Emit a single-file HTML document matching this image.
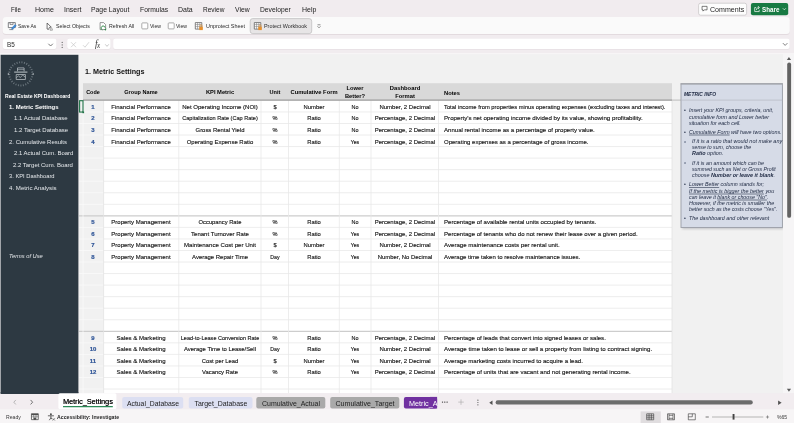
<!DOCTYPE html>
<html><head><meta charset="utf-8"><title>Real Estate KPI Dashboard</title>
<style>
html,body{margin:0;padding:0;}
body{width:794px;height:423px;overflow:hidden;background:#f1ecef;position:relative;font-family:"Liberation Sans",sans-serif;}
.t{position:absolute;white-space:nowrap;margin:0;padding:0;line-height:12px;}
#half{position:absolute;left:0;top:0;width:794px;height:423px;will-change:transform;transform:translateY(0.5px);}
#bgsvg{position:absolute;left:0;top:0;display:block;}
u{text-decoration-thickness:0.4px;text-underline-offset:0.5px;text-decoration-color:rgba(28,39,64,0.55);}
</style></head><body>
<svg id="bgsvg" width="794" height="423" viewBox="0 0 794 423">
<defs><filter id="bl" x="-10%" y="-10%" width="120%" height="120%"><feGaussianBlur stdDeviation="1"/></filter></defs>
<rect x="698.60" y="3.20" width="48.00" height="12.00" fill="#fdfdfd" rx="2" stroke="#c4c2c3" stroke-width="0.7" />
<g transform="translate(701.3,5.6) scale(0.5)"><path d="M1.500 1.500h10v7H6l-2.500 2.500V8.500h-2z" fill="none" stroke="#3a3a3a" stroke-width="1.3"/></g>
<rect x="750.90" y="3.10" width="37.30" height="12.10" fill="#187a43" rx="2" />
<g transform="translate(753.7,5.3) scale(0.5)"><path d="M5 4.500H2v8h9V9M5.500 9.500c0-3.500 2-5 5-5M8.500 1.500l3 3-3 3" fill="none" stroke="#fff" stroke-width="1.4"/></g>
<g transform="translate(782.6,7.8) scale(0.5)"><path d="M0.500 1l3 3 3-3" fill="none" stroke="#fff" stroke-width="1.4"/></g>
<rect x="2.60" y="17.50" width="787.20" height="17.40" fill="#e3dbdf" rx="3.5" />
<rect x="2.60" y="16.90" width="787.20" height="17.20" fill="#fafafa" rx="3.5" />
<g transform="translate(7.3,21.6) scale(0.5)"><path d="M2 2h14v10H2z" fill="#fff" stroke="#56585c" stroke-width="1.5"/><path d="M5.500 2v4h6V2M4 16h8" fill="none" stroke="#56585c" stroke-width="1.3"/><path d="M8.500 15.500l1-3.500 6-6 2.500 2.500-6 6z" fill="#3f8ad6" stroke="#2c6fb5" stroke-width="0.8"/></g>
<g transform="translate(45.6,22) scale(0.5)"><path d="M3 2l8.500 8.500H7.800L5.600 15 3 14z" fill="#fff" stroke="#3a3a3a" stroke-width="1.4"/><path d="M9 13.500h4.500v3H9z" fill="none" stroke="#666" stroke-width="1"/></g>
<g transform="translate(98.6,21.6) scale(0.5)"><path d="M3 2h7l4 4v10H3z" fill="#fff" stroke="#6a6a6a" stroke-width="1.4"/><path d="M7.500 16.500a4 4 0 1 1 5.500-4.500" fill="none" stroke="#2e8b47" stroke-width="2"/><path d="M11 15.500l4.500-1.500-1 4.500z" fill="#2e8b47"/></g>
<rect x="141.80" y="22.90" width="6.00" height="6.00" fill="#fff" rx="0.8" stroke="#8a8a8a" stroke-width="0.7" />
<rect x="168.20" y="22.90" width="6.00" height="6.00" fill="#fff" rx="0.8" stroke="#8a8a8a" stroke-width="0.7" />
<g transform="translate(194.3,21.6) scale(0.5)"><path d="M2 2h13v13H2z" fill="#fff" stroke="#5a5a5a" stroke-width="1.5"/><path d="M2 6h13M2 10h13M6.500 2v13M11 2v13" stroke="#7a7a7a" stroke-width="1.1" fill="none"/><path d="M10 10.500h7v6.500h-7z" fill="#e8912d"/><path d="M11.500 10.500V8.500a2 2 0 0 1 4 0v2" fill="none" stroke="#e8912d" stroke-width="1.3"/></g>
<rect x="250.20" y="18.60" width="61.50" height="15.00" fill="#e7e5e6" rx="2.5" stroke="#bcbabb" stroke-width="0.7" />
<g transform="translate(253.3,21.6) scale(0.5)"><path d="M2 2h13v13H2z" fill="#fff" stroke="#5a5a5a" stroke-width="1.5"/><path d="M2 6h13M2 10h13M6.500 2v13M11 2v13" stroke="#7a7a7a" stroke-width="1.1" fill="none"/><path d="M10 10.500h7v6.500h-7z" fill="#e8912d"/><path d="M11.500 10.500V8.500a2 2 0 0 1 4 0v2" fill="none" stroke="#e8912d" stroke-width="1.3"/></g>
<g transform="translate(316.5,23.8) scale(0.5)"><path d="M2 2h6M2 5l3 3 3-3" fill="none" stroke="#444" stroke-width="1.2"/></g>
<rect x="2.80" y="39.50" width="53.60" height="10.30" fill="#e6dfe3" rx="2" />
<rect x="67.20" y="39.50" width="43.30" height="10.30" fill="#e6dfe3" rx="2" />
<rect x="113.20" y="39.50" width="676.40" height="10.30" fill="#e6dfe3" rx="2" />
<rect x="2.80" y="38.80" width="53.60" height="10.30" fill="#fff" rx="2" />
<g transform="translate(47.6,43) scale(0.5)"><path d="M1.500 1.500L6 6l4.500-4.500" fill="none" stroke="#555" stroke-width="1.6"/></g>
<circle cx="62.2" cy="42.4" r="0.6" fill="#666"/>
<circle cx="62.2" cy="44.9" r="0.6" fill="#666"/>
<circle cx="62.2" cy="47.4" r="0.6" fill="#666"/>
<rect x="67.20" y="38.80" width="43.30" height="10.30" fill="#fff" rx="2" />
<g transform="translate(70,41.2) scale(0.5)"><path d="M2 2l10 10M12 2L2 12" stroke="#c6c6c6" stroke-width="1.4"/></g>
<g transform="translate(82,41.2) scale(0.5)"><path d="M2 8l4 4 8-10" fill="none" stroke="#c6c6c6" stroke-width="1.4"/></g>
<g transform="translate(104.5,43.6) scale(0.5)"><path d="M1.500 1.500L5 5.500l3.500-4" fill="none" stroke="#b0b0b0" stroke-width="1.4"/></g>
<rect x="113.20" y="38.80" width="676.40" height="10.30" fill="#fff" rx="2" />
<g transform="translate(782.4,42.4) scale(0.5)"><path d="M1 1.500L5.500 6 10 1.500" fill="none" stroke="#555" stroke-width="1.5"/></g>
<rect x="0.00" y="53.20" width="794.00" height="1.60" fill="#f8f7f8" />
<rect x="0.00" y="54.20" width="783.00" height="339.00" fill="#f1f1f1" />
<rect x="0.60" y="54.80" width="77.80" height="339.20" fill="#2d3942" />
<circle cx="20.8" cy="73.9" r="11.6" fill="none" stroke="#69747c" stroke-width="1.9" stroke-dasharray="1.0 1.5"/>
<circle cx="8.4" cy="73.9" r="0.75" fill="#c3c9cd"/><circle cx="33.2" cy="73.9" r="0.75" fill="#c3c9cd"/>
<g transform="translate(20.8,73.9)" fill="none" stroke="#b4bbc0" stroke-width="0.8"><path d="M-3.300 -2.600v-3.400h6.600v3.400"/><path d="M-3.300 -4.300h6.600" stroke-width="0.6"/><path d="M-6.600 -1.800h13.200" stroke-width="1.1"/><path d="M-4.600 0.600h9.200v5h-9.200z" stroke-width="0.8"/><path d="M-4.600 3.800l2.200-1.800 2 1.600 2.200-2.400 2.800 2" stroke-width="0.7"/></g>
<rect x="83.00" y="100.40" width="589.00" height="292.80" fill="#fff" />
<rect x="83.00" y="100.40" width="20.60" height="292.80" fill="#f1f1f1" />
<path d="M103.60 111.95L672.00 111.95" stroke="#e7e7e7" stroke-width="0.75" fill="none"/>
<path d="M79.00 111.95L103.60 111.95" stroke="#fbfbfb" stroke-width="0.7" fill="none"/>
<path d="M103.60 123.49L672.00 123.49" stroke="#e7e7e7" stroke-width="0.75" fill="none"/>
<path d="M79.00 123.49L103.60 123.49" stroke="#fbfbfb" stroke-width="0.7" fill="none"/>
<path d="M103.60 135.03L672.00 135.03" stroke="#e7e7e7" stroke-width="0.75" fill="none"/>
<path d="M79.00 135.03L103.60 135.03" stroke="#fbfbfb" stroke-width="0.7" fill="none"/>
<path d="M103.60 146.58L672.00 146.58" stroke="#e7e7e7" stroke-width="0.75" fill="none"/>
<path d="M79.00 146.58L103.60 146.58" stroke="#fbfbfb" stroke-width="0.7" fill="none"/>
<path d="M103.60 158.12L672.00 158.12" stroke="#e7e7e7" stroke-width="0.75" fill="none"/>
<path d="M79.00 158.12L103.60 158.12" stroke="#fbfbfb" stroke-width="0.7" fill="none"/>
<path d="M103.60 169.67L672.00 169.67" stroke="#e7e7e7" stroke-width="0.75" fill="none"/>
<path d="M79.00 169.67L103.60 169.67" stroke="#fbfbfb" stroke-width="0.7" fill="none"/>
<path d="M103.60 181.21L672.00 181.21" stroke="#e7e7e7" stroke-width="0.75" fill="none"/>
<path d="M79.00 181.21L103.60 181.21" stroke="#fbfbfb" stroke-width="0.7" fill="none"/>
<path d="M103.60 192.76L672.00 192.76" stroke="#e7e7e7" stroke-width="0.75" fill="none"/>
<path d="M79.00 192.76L103.60 192.76" stroke="#fbfbfb" stroke-width="0.7" fill="none"/>
<path d="M103.60 204.30L672.00 204.30" stroke="#e7e7e7" stroke-width="0.75" fill="none"/>
<path d="M79.00 204.30L103.60 204.30" stroke="#fbfbfb" stroke-width="0.7" fill="none"/>
<path d="M79.00 215.85L672.00 215.85" stroke="#cdcdcd" stroke-width="1.2" fill="none"/>
<path d="M103.60 227.39L672.00 227.39" stroke="#e7e7e7" stroke-width="0.75" fill="none"/>
<path d="M79.00 227.39L103.60 227.39" stroke="#fbfbfb" stroke-width="0.7" fill="none"/>
<path d="M103.60 238.94L672.00 238.94" stroke="#e7e7e7" stroke-width="0.75" fill="none"/>
<path d="M79.00 238.94L103.60 238.94" stroke="#fbfbfb" stroke-width="0.7" fill="none"/>
<path d="M103.60 250.48L672.00 250.48" stroke="#e7e7e7" stroke-width="0.75" fill="none"/>
<path d="M79.00 250.48L103.60 250.48" stroke="#fbfbfb" stroke-width="0.7" fill="none"/>
<path d="M103.60 262.03L672.00 262.03" stroke="#e7e7e7" stroke-width="0.75" fill="none"/>
<path d="M79.00 262.03L103.60 262.03" stroke="#fbfbfb" stroke-width="0.7" fill="none"/>
<path d="M103.60 273.57L672.00 273.57" stroke="#e7e7e7" stroke-width="0.75" fill="none"/>
<path d="M79.00 273.57L103.60 273.57" stroke="#fbfbfb" stroke-width="0.7" fill="none"/>
<path d="M103.60 285.12L672.00 285.12" stroke="#e7e7e7" stroke-width="0.75" fill="none"/>
<path d="M79.00 285.12L103.60 285.12" stroke="#fbfbfb" stroke-width="0.7" fill="none"/>
<path d="M103.60 296.66L672.00 296.66" stroke="#e7e7e7" stroke-width="0.75" fill="none"/>
<path d="M79.00 296.66L103.60 296.66" stroke="#fbfbfb" stroke-width="0.7" fill="none"/>
<path d="M103.60 308.21L672.00 308.21" stroke="#e7e7e7" stroke-width="0.75" fill="none"/>
<path d="M79.00 308.21L103.60 308.21" stroke="#fbfbfb" stroke-width="0.7" fill="none"/>
<path d="M103.60 319.75L672.00 319.75" stroke="#e7e7e7" stroke-width="0.75" fill="none"/>
<path d="M79.00 319.75L103.60 319.75" stroke="#fbfbfb" stroke-width="0.7" fill="none"/>
<path d="M79.00 331.30L672.00 331.30" stroke="#cdcdcd" stroke-width="1.2" fill="none"/>
<path d="M103.60 342.84L672.00 342.84" stroke="#e7e7e7" stroke-width="0.75" fill="none"/>
<path d="M79.00 342.84L103.60 342.84" stroke="#fbfbfb" stroke-width="0.7" fill="none"/>
<path d="M103.60 354.39L672.00 354.39" stroke="#e7e7e7" stroke-width="0.75" fill="none"/>
<path d="M79.00 354.39L103.60 354.39" stroke="#fbfbfb" stroke-width="0.7" fill="none"/>
<path d="M103.60 365.94L672.00 365.94" stroke="#e7e7e7" stroke-width="0.75" fill="none"/>
<path d="M79.00 365.94L103.60 365.94" stroke="#fbfbfb" stroke-width="0.7" fill="none"/>
<path d="M103.60 377.48L672.00 377.48" stroke="#e7e7e7" stroke-width="0.75" fill="none"/>
<path d="M79.00 377.48L103.60 377.48" stroke="#fbfbfb" stroke-width="0.7" fill="none"/>
<path d="M103.60 389.03L672.00 389.03" stroke="#e7e7e7" stroke-width="0.75" fill="none"/>
<path d="M79.00 389.03L103.60 389.03" stroke="#fbfbfb" stroke-width="0.7" fill="none"/>
<path d="M178.80 100.40L178.80 393.20" stroke="#e7e7e7" stroke-width="0.75" fill="none"/>
<path d="M261.00 100.40L261.00 393.20" stroke="#e7e7e7" stroke-width="0.75" fill="none"/>
<path d="M288.50 100.40L288.50 393.20" stroke="#e7e7e7" stroke-width="0.75" fill="none"/>
<path d="M339.30 100.40L339.30 393.20" stroke="#e7e7e7" stroke-width="0.75" fill="none"/>
<path d="M371.00 100.40L371.00 393.20" stroke="#e7e7e7" stroke-width="0.75" fill="none"/>
<path d="M438.50 100.40L438.50 393.20" stroke="#e7e7e7" stroke-width="0.75" fill="none"/>
<path d="M103.60 100.40L103.60 393.20" stroke="#e4e4e4" stroke-width="0.75" fill="none"/>
<path d="M672.00 100.40L672.00 393.20" stroke="#e2e2e2" stroke-width="0.75" fill="none"/>
<path d="M83.00 100.40L83.00 393.20" stroke="#fbfbfb" stroke-width="0.7" fill="none"/>
<rect x="83.00" y="83.20" width="589.00" height="17.20" fill="#d9d9d9" />
<path d="M83.00 100.10L672.00 100.10" stroke="#8c8c8c" stroke-width="1.0" fill="none"/>
<path d="M672.00 100.10L782.00 100.10" stroke="#b5b5b5" stroke-width="0.9" fill="none"/>
<rect x="79.60" y="100.70" width="3.40" height="11.35" fill="none" stroke="#1e7145" stroke-width="1.1" />
<rect x="82.40" y="111.50" width="1.70" height="1.70" fill="#1e7145" />
<rect x="682.20" y="85.40" width="101.40" height="143.70" fill="#8e9096" opacity="0.45" filter="url(#bl)"/>
<rect x="681.00" y="83.80" width="101.40" height="143.70" fill="#d6dbe7" stroke="#9b9ea7" stroke-width="0.9" />
<path d="M681.00 100.10L782.40 100.10" stroke="#b4b8c2" stroke-width="0.7" fill="none"/>
<path d="M680.60 83.80L782.80 83.80" stroke="#a2a4aa" stroke-width="1.3" fill="none"/>
<rect x="783.00" y="54.20" width="11.00" height="339.00" fill="#f6f5f6" />
<rect x="787.20" y="62.60" width="3.90" height="155.20" fill="#636363" rx="1.9" />
<g transform="translate(786.6,56.6) scale(0.5)"><path d="M0.500 7l4.200-6 4.200 6z" fill="#5a5a5a"/></g>
<g transform="translate(786.6,388.6) scale(0.5)"><path d="M0.500 0.500l4.200 6 4.200-6z" fill="#5a5a5a"/></g>
<rect x="0.00" y="393.20" width="794.00" height="29.80" fill="#f2edf0" />
<rect x="0.00" y="409.30" width="794.00" height="14.00" fill="#f7f5f6" />
<rect x="0.60" y="392.20" width="77.80" height="1.80" fill="#2d3942" />
<g transform="translate(12.8,399.2) scale(0.5)"><path d="M6 1.500L2 6l4 4.500" fill="none" stroke="#a0a0a0" stroke-width="1.5"/></g>
<g transform="translate(29.6,399.2) scale(0.5)"><path d="M2 1.500L6 6l-4 4.500" fill="none" stroke="#4a4a4a" stroke-width="1.5"/></g>
<rect x="58.40" y="393.20" width="58.00" height="15.80" fill="#fff" rx="1.5" />
<path d="M63.00 406.60L112.80 406.60" stroke="#2c8a57" stroke-width="1.1" fill="none"/>
<rect x="122.20" y="396.90" width="61.00" height="11.60" fill="#dcdff2" rx="2" />
<rect x="188.80" y="396.90" width="63.70" height="11.60" fill="#dcdff2" rx="2" />
<rect x="256.30" y="396.90" width="69.00" height="11.60" fill="#a9a9a9" rx="2" />
<rect x="330.20" y="396.90" width="69.10" height="11.60" fill="#a9a9a9" rx="2" />
<rect x="403.90" y="396.90" width="33.20" height="11.60" fill="#7030a0" rx="2" />
<rect x="430.00" y="396.90" width="7.10" height="11.60" fill="#7030a0" />
<circle cx="442.5" cy="402.1" r="0.7" fill="#333"/>
<circle cx="444.8" cy="402.1" r="0.7" fill="#333"/>
<circle cx="447.1" cy="402.1" r="0.7" fill="#333"/>
<g transform="translate(458,399.1) scale(0.5)"><path d="M6 0.500v11M0.500 6h11" stroke="#a6a6a6" stroke-width="1.2"/></g>
<circle cx="477.9" cy="400.2" r="0.6" fill="#555"/>
<circle cx="477.9" cy="402.5" r="0.6" fill="#555"/>
<circle cx="477.9" cy="404.8" r="0.6" fill="#555"/>
<g transform="translate(489,400.2) scale(0.5)"><path d="M7 0.500L0.500 5l6.500 4.500z" fill="#505050"/></g>
<rect x="495.60" y="400.30" width="257.20" height="4.20" fill="#6b6b6b" rx="2.1" />
<g transform="translate(777.6,400.2) scale(0.5)"><path d="M1 0.500L8 5l-7 4.500z" fill="#505050"/></g>
<g transform="translate(30.8,413.0) scale(0.5)"><path d="M1.300 1.300h13.600v12h-13.600z" fill="#fff" stroke="#4d4d4d" stroke-width="1.6"/><path d="M1.300 3.200h13.600" stroke="#4d4d4d" stroke-width="2.4"/><path d="M1.300 7.600h13.600M5.800 3.200v10M10.400 3.200v10" stroke="#5a5a5a" stroke-width="1.2" fill="none"/><circle cx="8.200" cy="11.400" r="2.400" fill="#4d4d4d"/></g>
<g transform="translate(47.4,413.0) scale(0.5)"><circle cx="7" cy="2.400" r="1.900" fill="#4a4a4a"/><path d="M1 5.600h12M7 5.600v4.400M7 9.600l-3.200 4.800M7 9.600l2.400 3" fill="none" stroke="#4a4a4a" stroke-width="1.700"/><path d="M10.500 10.500l4.500 4.500M15 10.500l-4.500 4.500" stroke="#4a4a4a" stroke-width="1.300"/></g>
<rect x="640.60" y="411.40" width="20.20" height="11.60" fill="#e0dddf" />
<g transform="translate(646.2,413.3) scale(0.5)"><path d="M1 1h14v12H1zM1 5h14M1 9h14M5.700 1v12M10.300 1v12" fill="none" stroke="#333" stroke-width="1.2"/></g>
<g transform="translate(667,413.3) scale(0.5)"><path d="M1 1h14v12H1zM4 1v12M12 1v12M4 4h8M4 10h8" fill="none" stroke="#333" stroke-width="1.2"/></g>
<g transform="translate(687.8,413.3) scale(0.5)"><path d="M1 1h14v12H1zM1 7h8M9 1v6" fill="none" stroke="#333" stroke-width="1.2"/></g>
<path d="M705.60 417.00L708.80 417.00" stroke="#555" stroke-width="0.8" fill="none"/>
<path d="M712.00 417.00L763.30 417.00" stroke="#8a8a8a" stroke-width="0.6" fill="none"/>
<rect x="732.60" y="414.00" width="1.90" height="5.60" fill="#444" />
<g transform="translate(765.9,415.4) scale(0.5)"><path d="M3.200 0v6.400M0 3.200h6.400" stroke="#555" stroke-width="1.1"/></g>
</svg>
<div class="t" style="top:4px;font-size:7.3px;color:#222;left:11.30px;transform-origin:0 50%;transform:scaleX(0.8417);">File</div>
<div class="t" style="top:4px;font-size:7.3px;color:#222;left:34.80px;transform-origin:0 50%;transform:scaleX(0.9706);">Home</div>
<div class="t" style="top:4px;font-size:7.3px;color:#222;left:63.70px;transform-origin:0 50%;transform:scaleX(0.9531);">Insert</div>
<div class="t" style="top:4px;font-size:7.3px;color:#222;left:91.40px;transform-origin:0 50%;transform:scaleX(0.9343);">Page Layout</div>
<div class="t" style="top:4px;font-size:7.3px;color:#222;left:139.80px;transform-origin:0 50%;transform:scaleX(0.9270);">Formulas</div>
<div class="t" style="top:4px;font-size:7.3px;color:#222;left:178.00px;transform-origin:0 50%;transform:scaleX(0.9534);">Data</div>
<div class="t" style="top:4px;font-size:7.3px;color:#222;left:203.20px;transform-origin:0 50%;transform:scaleX(0.8941);">Review</div>
<div class="t" style="top:4px;font-size:7.3px;color:#222;left:235.20px;transform-origin:0 50%;transform:scaleX(0.9305);">View</div>
<div class="t" style="top:4px;font-size:7.3px;color:#222;left:260.10px;transform-origin:0 50%;transform:scaleX(0.9227);">Developer</div>
<div class="t" style="top:4px;font-size:7.3px;color:#222;left:301.70px;transform-origin:0 50%;transform:scaleX(0.9525);">Help</div>
<div class="t" style="top:4px;font-size:7.3px;color:#262626;left:709.60px;transform-origin:0 50%;transform:scaleX(0.9691);">Comments</div>
<div class="t" style="top:4px;font-size:7.3px;color:#fff;font-weight:bold;left:762.00px;transform-origin:0 50%;transform:scaleX(0.8576);">Share</div>
<div class="t" style="top:39px;font-size:6.6px;color:#2a2a2a;left:7.00px;transform-origin:0 50%;transform:scaleX(0.9662);">B5</div>
<div class="t" style="left:94.8px;top:38.2px;font-size:9.6px;line-height:12px;font-family:'Liberation Serif',serif;font-style:italic;color:#3c3c3c;transform:scaleX(0.96);transform-origin:0 50%;">f<span style="font-size:7.4px;position:relative;top:0.6px;left:-0.6px">x</span></div>
<div class="t" style="top:90px;font-size:5.3px;color:#fff;font-weight:bold;left:5.20px;transform-origin:0 50%;transform:scaleX(0.9627);">Real Estate KPI Dashboard</div>
<div class="t" style="top:112px;font-size:6.0px;color:#e6e9ec;left:13.50px;transform-origin:0 50%;transform:scaleX(0.9980);">1.1 Actual Database</div>
<div class="t" style="top:147px;font-size:6.0px;color:#e6e9ec;left:13.50px;transform-origin:0 50%;transform:scaleX(0.9879);">2.1 Actual Cum. Board</div>
<div class="t" style="top:170px;font-size:6.0px;color:#e6e9ec;left:9.20px;transform-origin:0 50%;transform:scaleX(0.9608);">3. KPI Dashboard</div>
<div class="t" style="top:182px;font-size:6.0px;color:#e6e9ec;left:9.20px;transform-origin:0 50%;transform:scaleX(1.0197);">4. Metric Analysis</div>
<div class="t" style="top:250px;font-size:6.2px;color:#e6e9ec;font-style:italic;left:8.70px;transform-origin:0 50%;transform:scaleX(0.9226);">Terms of Use</div>
<div class="t" style="top:66px;font-size:8.0px;color:#111;font-weight:bold;left:84.80px;transform-origin:0 50%;transform:scaleX(0.8983);">1. Metric Settings</div>
<div class="t" style="top:86px;font-size:6.1px;color:#000;font-weight:bold;left:-106.60px;width:400px;text-align:center;transform-origin:50% 50%;transform:scaleX(0.8919);">Code</div>
<div class="t" style="top:86px;font-size:6.1px;color:#000;font-weight:bold;left:-58.70px;width:400px;text-align:center;transform-origin:50% 50%;transform:scaleX(0.9152);">Group Name</div>
<div class="t" style="top:86px;font-size:6.1px;color:#000;font-weight:bold;left:20.30px;width:400px;text-align:center;transform-origin:50% 50%;transform:scaleX(0.9454);">KPI Metric</div>
<div class="t" style="top:86px;font-size:6.1px;color:#000;font-weight:bold;left:74.60px;width:400px;text-align:center;transform-origin:50% 50%;transform:scaleX(0.9109);">Unit</div>
<div class="t" style="top:86px;font-size:6.1px;color:#000;font-weight:bold;left:114.10px;width:400px;text-align:center;transform-origin:50% 50%;transform:scaleX(0.9454);">Cumulative Form</div>
<div class="t" style="top:82px;font-size:6.1px;color:#000;font-weight:bold;left:155.20px;width:400px;text-align:center;transform-origin:50% 50%;transform:scaleX(0.9408);">Lower</div>
<div class="t" style="top:90px;font-size:6.1px;color:#000;font-weight:bold;left:155.30px;width:400px;text-align:center;transform-origin:50% 50%;transform:scaleX(0.9414);">Better?</div>
<div class="t" style="top:82px;font-size:6.1px;color:#000;font-weight:bold;left:204.90px;width:400px;text-align:center;transform-origin:50% 50%;transform:scaleX(0.9573);">Dashboard</div>
<div class="t" style="top:90px;font-size:6.1px;color:#000;font-weight:bold;left:205.20px;width:400px;text-align:center;transform-origin:50% 50%;transform:scaleX(0.9529);">Format</div>
<div class="t" style="top:112px;font-size:6.1px;color:#2f5597;font-weight:bold;left:-106.60px;width:400px;text-align:center;transform-origin:50% 50%;transform:scaleX(0.9800);-webkit-text-stroke:0.2px #2f5597;">2</div>
<div class="t" style="top:112px;font-size:6.0px;color:#161616;left:-58.60px;width:400px;text-align:center;transform-origin:50% 50%;transform:scaleX(0.9896);-webkit-text-stroke:0.14px #161616;">Financial Performance</div>
<div class="t" style="top:112px;font-size:6.0px;color:#161616;left:20.10px;width:400px;text-align:center;transform-origin:50% 50%;transform:scaleX(0.9291);-webkit-text-stroke:0.14px #161616;">Capitalization Rate (Cap Rate)</div>
<div class="t" style="top:112px;font-size:6.0px;color:#161616;left:74.80px;width:400px;text-align:center;transform-origin:50% 50%;transform:scaleX(0.9372);-webkit-text-stroke:0.14px #161616;">%</div>
<div class="t" style="top:112px;font-size:6.0px;color:#161616;left:114.20px;width:400px;text-align:center;transform-origin:50% 50%;transform:scaleX(0.9710);-webkit-text-stroke:0.14px #161616;">Ratio</div>
<div class="t" style="top:112px;font-size:6.0px;color:#161616;left:155.20px;width:400px;text-align:center;transform-origin:50% 50%;transform:scaleX(0.9127);-webkit-text-stroke:0.14px #161616;">No</div>
<div class="t" style="top:112px;font-size:6.0px;color:#161616;left:204.70px;width:400px;text-align:center;transform-origin:50% 50%;transform:scaleX(0.9968);-webkit-text-stroke:0.14px #161616;">Percentage, 2 Decimal</div>
<div class="t" style="top:112px;font-size:6.0px;color:#161616;left:444.00px;transform-origin:0 50%;transform:scaleX(1.0248);-webkit-text-stroke:0.14px #161616;">Property's net operating income divided by its value, showing profitability.</div>
<div class="t" style="top:216px;font-size:6.1px;color:#2f5597;font-weight:bold;left:-106.60px;width:400px;text-align:center;transform-origin:50% 50%;transform:scaleX(0.9800);-webkit-text-stroke:0.2px #2f5597;">5</div>
<div class="t" style="top:216px;font-size:6.0px;color:#161616;left:-58.60px;width:400px;text-align:center;transform-origin:50% 50%;transform:scaleX(0.9980);-webkit-text-stroke:0.14px #161616;">Property Management</div>
<div class="t" style="top:216px;font-size:6.0px;color:#161616;left:20.10px;width:400px;text-align:center;transform-origin:50% 50%;transform:scaleX(0.9650);-webkit-text-stroke:0.14px #161616;">Occupancy Rate</div>
<div class="t" style="top:216px;font-size:6.0px;color:#161616;left:74.80px;width:400px;text-align:center;transform-origin:50% 50%;transform:scaleX(0.9372);-webkit-text-stroke:0.14px #161616;">%</div>
<div class="t" style="top:216px;font-size:6.0px;color:#161616;left:114.20px;width:400px;text-align:center;transform-origin:50% 50%;transform:scaleX(0.9710);-webkit-text-stroke:0.14px #161616;">Ratio</div>
<div class="t" style="top:216px;font-size:6.0px;color:#161616;left:155.20px;width:400px;text-align:center;transform-origin:50% 50%;transform:scaleX(0.9127);-webkit-text-stroke:0.14px #161616;">No</div>
<div class="t" style="top:216px;font-size:6.0px;color:#161616;left:204.70px;width:400px;text-align:center;transform-origin:50% 50%;transform:scaleX(0.9968);-webkit-text-stroke:0.14px #161616;">Percentage, 2 Decimal</div>
<div class="t" style="top:216px;font-size:6.0px;color:#161616;left:444.00px;transform-origin:0 50%;transform:scaleX(1.0125);-webkit-text-stroke:0.14px #161616;">Percentage of available rental units occupied by tenants.</div>
<div class="t" style="top:239px;font-size:6.1px;color:#2f5597;font-weight:bold;left:-106.60px;width:400px;text-align:center;transform-origin:50% 50%;transform:scaleX(0.9800);-webkit-text-stroke:0.2px #2f5597;">7</div>
<div class="t" style="top:239px;font-size:6.0px;color:#161616;left:-58.60px;width:400px;text-align:center;transform-origin:50% 50%;transform:scaleX(0.9980);-webkit-text-stroke:0.14px #161616;">Property Management</div>
<div class="t" style="top:239px;font-size:6.0px;color:#161616;left:20.10px;width:400px;text-align:center;transform-origin:50% 50%;transform:scaleX(1.0136);-webkit-text-stroke:0.14px #161616;">Maintenance Cost per Unit</div>
<div class="t" style="top:239px;font-size:6.0px;color:#161616;left:74.80px;width:400px;text-align:center;transform-origin:50% 50%;transform:scaleX(0.9591);-webkit-text-stroke:0.14px #161616;">$</div>
<div class="t" style="top:239px;font-size:6.0px;color:#161616;left:114.20px;width:400px;text-align:center;transform-origin:50% 50%;transform:scaleX(0.9795);-webkit-text-stroke:0.14px #161616;">Number</div>
<div class="t" style="top:239px;font-size:6.0px;color:#161616;left:155.20px;width:400px;text-align:center;transform-origin:50% 50%;transform:scaleX(0.8582);-webkit-text-stroke:0.14px #161616;">Yes</div>
<div class="t" style="top:239px;font-size:6.0px;color:#161616;left:204.70px;width:400px;text-align:center;transform-origin:50% 50%;transform:scaleX(1.0036);-webkit-text-stroke:0.14px #161616;">Number, 2 Decimal</div>
<div class="t" style="top:239px;font-size:6.0px;color:#161616;left:444.00px;transform-origin:0 50%;transform:scaleX(1.0154);-webkit-text-stroke:0.14px #161616;">Average maintenance costs per rental unit.</div>
<div class="t" style="top:343px;font-size:6.1px;color:#2f5597;font-weight:bold;left:-106.60px;width:400px;text-align:center;transform-origin:50% 50%;transform:scaleX(0.9800);-webkit-text-stroke:0.2px #2f5597;">10</div>
<div class="t" style="top:343px;font-size:6.0px;color:#161616;left:-58.60px;width:400px;text-align:center;transform-origin:50% 50%;transform:scaleX(1.0064);-webkit-text-stroke:0.14px #161616;">Sales &amp; Marketing</div>
<div class="t" style="top:343px;font-size:6.0px;color:#161616;left:20.10px;width:400px;text-align:center;transform-origin:50% 50%;transform:scaleX(0.9828);-webkit-text-stroke:0.14px #161616;">Average Time to Lease/Sell</div>
<div class="t" style="top:343px;font-size:6.0px;color:#161616;left:74.80px;width:400px;text-align:center;transform-origin:50% 50%;transform:scaleX(0.8716);-webkit-text-stroke:0.14px #161616;">Day</div>
<div class="t" style="top:343px;font-size:6.0px;color:#161616;left:114.20px;width:400px;text-align:center;transform-origin:50% 50%;transform:scaleX(0.9710);-webkit-text-stroke:0.14px #161616;">Ratio</div>
<div class="t" style="top:343px;font-size:6.0px;color:#161616;left:155.20px;width:400px;text-align:center;transform-origin:50% 50%;transform:scaleX(0.8582);-webkit-text-stroke:0.14px #161616;">Yes</div>
<div class="t" style="top:343px;font-size:6.0px;color:#161616;left:204.70px;width:400px;text-align:center;transform-origin:50% 50%;transform:scaleX(1.0036);-webkit-text-stroke:0.14px #161616;">Number, 2 Decimal</div>
<div class="t" style="top:343px;font-size:6.0px;color:#161616;left:444.00px;transform-origin:0 50%;transform:scaleX(1.0236);-webkit-text-stroke:0.14px #161616;">Average time taken to lease or sell a property from listing to contract signing.</div>
<div class="t" style="top:366px;font-size:6.1px;color:#2f5597;font-weight:bold;left:-106.60px;width:400px;text-align:center;transform-origin:50% 50%;transform:scaleX(0.9800);-webkit-text-stroke:0.2px #2f5597;">12</div>
<div class="t" style="top:366px;font-size:6.0px;color:#161616;left:-58.60px;width:400px;text-align:center;transform-origin:50% 50%;transform:scaleX(1.0064);-webkit-text-stroke:0.14px #161616;">Sales &amp; Marketing</div>
<div class="t" style="top:366px;font-size:6.0px;color:#161616;left:20.10px;width:400px;text-align:center;transform-origin:50% 50%;transform:scaleX(0.9754);-webkit-text-stroke:0.14px #161616;">Vacancy Rate</div>
<div class="t" style="top:366px;font-size:6.0px;color:#161616;left:74.80px;width:400px;text-align:center;transform-origin:50% 50%;transform:scaleX(0.9372);-webkit-text-stroke:0.14px #161616;">%</div>
<div class="t" style="top:366px;font-size:6.0px;color:#161616;left:114.20px;width:400px;text-align:center;transform-origin:50% 50%;transform:scaleX(0.9710);-webkit-text-stroke:0.14px #161616;">Ratio</div>
<div class="t" style="top:366px;font-size:6.0px;color:#161616;left:155.20px;width:400px;text-align:center;transform-origin:50% 50%;transform:scaleX(0.8582);-webkit-text-stroke:0.14px #161616;">Yes</div>
<div class="t" style="top:366px;font-size:6.0px;color:#161616;left:204.70px;width:400px;text-align:center;transform-origin:50% 50%;transform:scaleX(0.9968);-webkit-text-stroke:0.14px #161616;">Percentage, 2 Decimal</div>
<div class="t" style="top:366px;font-size:6.0px;color:#161616;left:444.00px;transform-origin:0 50%;transform:scaleX(1.0136);-webkit-text-stroke:0.14px #161616;">Percentage of units that are vacant and not generating rental income.</div>
<div class="t" style="top:88px;font-size:5.3px;color:#1c2740;font-weight:bold;font-style:italic;left:683.60px;transform-origin:0 50%;transform:scaleX(0.9319);">METRIC INFO</div>
<div class="t" style="top:104px;font-size:5.2px;color:#1c2740;left:684.00px;transform-origin:0 50%;transform:scaleX(0.9980);">•</div>
<div class="t" style="top:104px;font-size:5.3px;color:#1c2740;font-style:italic;left:688.90px;transform-origin:0 50%;transform:scaleX(0.9980);">Insert your KPI groups, criteria, unit,</div>
<div class="t" style="top:117px;font-size:5.3px;color:#1c2740;font-style:italic;left:688.90px;transform-origin:0 50%;transform:scaleX(1.0106);">situation for each cell.</div>
<div class="t" style="top:135px;font-size:5.3px;color:#1c2740;font-style:italic;left:691.60px;transform-origin:0 50%;transform:scaleX(1.0310);">If it is a ratio that would not make any</div>
<div class="t" style="top:147px;font-size:5.3px;color:#1c2740;font-style:italic;left:691.60px;transform-origin:0 50%;transform:scaleX(1.0250);"><b>Ratio</b> option.</div>
<div class="t" style="top:157px;font-size:3.8px;color:#4a556e;left:684.20px;transform-origin:0 50%;transform:scaleX(0.9980);">o</div>
<div class="t" style="top:169px;font-size:5.3px;color:#1c2740;font-style:italic;left:691.60px;transform-origin:0 50%;transform:scaleX(1.0171);">choose <b>Number or leave it blank</b>.</div>
<div class="t" style="top:178px;font-size:5.2px;color:#1c2740;left:684.00px;transform-origin:0 50%;transform:scaleX(0.9980);">•</div>
<div class="t" style="top:178px;font-size:5.3px;color:#1c2740;font-style:italic;left:688.90px;transform-origin:0 50%;transform:scaleX(1.0038);"><u>Lower Better</u> column stands for;</div>
<div class="t" style="top:197px;font-size:5.3px;color:#1c2740;font-style:italic;left:688.90px;transform-origin:0 50%;transform:scaleX(1.0186);">However, if the metric is smaller the</div>
<div class="t" style="top:203px;font-size:5.3px;color:#1c2740;font-style:italic;left:688.90px;transform-origin:0 50%;transform:scaleX(0.9814);">better such as the costs choose "Yes".</div>
<div class="t" style="top:212px;font-size:5.2px;color:#1c2740;left:684.00px;transform-origin:0 50%;transform:scaleX(0.9980);">•</div>
<div class="t" style="top:212px;font-size:5.3px;color:#1c2740;font-style:italic;left:688.90px;transform-origin:0 50%;transform:scaleX(1.0057);">The dashboard and other relevant</div>
<div class="t" style="top:396px;font-size:7.4px;color:#111;left:63.00px;transform-origin:0 50%;transform:scaleX(0.9766);text-shadow:0.25px 0 0 #111;">Metric_Settings</div>
<div class="t" style="top:411px;font-size:5.4px;color:#3a3a3a;left:5.50px;transform-origin:0 50%;transform:scaleX(0.9482);">Ready</div>
<div class="t" style="top:411px;font-size:5.4px;color:#262626;font-weight:bold;left:56.70px;transform-origin:0 50%;transform:scaleX(0.9640);">Accessibility: Investigate</div>
<div class="t" style="top:411px;font-size:5.3px;color:#3a3a3a;left:776.60px;transform-origin:0 50%;transform:scaleX(0.9616);">%65</div>
<div id="half">
<div class="t" style="top:19px;font-size:5.9px;color:#2a2a2a;left:18.30px;transform-origin:0 50%;transform:scaleX(0.8500);">Save As</div>
<div class="t" style="top:19px;font-size:5.9px;color:#2a2a2a;left:55.80px;transform-origin:0 50%;transform:scaleX(0.8886);">Select Objects</div>
<div class="t" style="top:19px;font-size:5.9px;color:#2a2a2a;left:108.80px;transform-origin:0 50%;transform:scaleX(0.8833);">Refresh All</div>
<div class="t" style="top:19px;font-size:5.9px;color:#2a2a2a;left:150.20px;transform-origin:0 50%;transform:scaleX(0.8674);">View</div>
<div class="t" style="top:19px;font-size:5.9px;color:#2a2a2a;left:176.40px;transform-origin:0 50%;transform:scaleX(0.8674);">View</div>
<div class="t" style="top:19px;font-size:5.9px;color:#2a2a2a;left:205.50px;transform-origin:0 50%;transform:scaleX(0.9148);">Unprotect Sheet</div>
<div class="t" style="top:19px;font-size:5.9px;color:#2a2a2a;left:264.00px;transform-origin:0 50%;transform:scaleX(0.9192);">Protect Workbook</div>
<div class="t" style="top:100px;font-size:6.0px;color:#fff;font-weight:bold;left:9.10px;transform-origin:0 50%;transform:scaleX(0.9980);">1. Metric Settings</div>
<div class="t" style="top:123px;font-size:6.0px;color:#e6e9ec;left:13.50px;transform-origin:0 50%;transform:scaleX(1.0033);">1.2 Target Database</div>
<div class="t" style="top:135px;font-size:6.0px;color:#e6e9ec;left:9.10px;transform-origin:0 50%;transform:scaleX(0.9939);">2. Cumulative Results</div>
<div class="t" style="top:158px;font-size:6.0px;color:#e6e9ec;left:13.30px;transform-origin:0 50%;transform:scaleX(0.9925);">2.2 Target Cum. Board</div>
<div class="t" style="top:86px;font-size:6.1px;color:#000;font-weight:bold;left:444.40px;transform-origin:0 50%;transform:scaleX(0.9441);">Notes</div>
<div class="t" style="top:100px;font-size:6.1px;color:#2f5597;font-weight:bold;left:-106.60px;width:400px;text-align:center;transform-origin:50% 50%;transform:scaleX(0.9800);-webkit-text-stroke:0.2px #2f5597;">1</div>
<div class="t" style="top:100px;font-size:6.0px;color:#161616;left:-58.60px;width:400px;text-align:center;transform-origin:50% 50%;transform:scaleX(0.9896);-webkit-text-stroke:0.14px #161616;">Financial Performance</div>
<div class="t" style="top:100px;font-size:6.0px;color:#161616;left:20.10px;width:400px;text-align:center;transform-origin:50% 50%;transform:scaleX(1.0077);-webkit-text-stroke:0.14px #161616;">Net Operating Income (NOI)</div>
<div class="t" style="top:100px;font-size:6.0px;color:#161616;left:74.80px;width:400px;text-align:center;transform-origin:50% 50%;transform:scaleX(0.9591);-webkit-text-stroke:0.14px #161616;">$</div>
<div class="t" style="top:100px;font-size:6.0px;color:#161616;left:114.20px;width:400px;text-align:center;transform-origin:50% 50%;transform:scaleX(0.9795);-webkit-text-stroke:0.14px #161616;">Number</div>
<div class="t" style="top:100px;font-size:6.0px;color:#161616;left:155.20px;width:400px;text-align:center;transform-origin:50% 50%;transform:scaleX(0.9127);-webkit-text-stroke:0.14px #161616;">No</div>
<div class="t" style="top:100px;font-size:6.0px;color:#161616;left:204.70px;width:400px;text-align:center;transform-origin:50% 50%;transform:scaleX(1.0036);-webkit-text-stroke:0.14px #161616;">Number, 2 Decimal</div>
<div class="t" style="top:100px;font-size:6.0px;color:#161616;left:444.00px;transform-origin:0 50%;transform:scaleX(0.9664);-webkit-text-stroke:0.14px #161616;">Total income from properties minus operating expenses (excluding taxes and interest).</div>
<div class="t" style="top:123px;font-size:6.1px;color:#2f5597;font-weight:bold;left:-106.60px;width:400px;text-align:center;transform-origin:50% 50%;transform:scaleX(0.9800);-webkit-text-stroke:0.2px #2f5597;">3</div>
<div class="t" style="top:123px;font-size:6.0px;color:#161616;left:-58.60px;width:400px;text-align:center;transform-origin:50% 50%;transform:scaleX(0.9896);-webkit-text-stroke:0.14px #161616;">Financial Performance</div>
<div class="t" style="top:123px;font-size:6.0px;color:#161616;left:20.10px;width:400px;text-align:center;transform-origin:50% 50%;transform:scaleX(0.9841);-webkit-text-stroke:0.14px #161616;">Gross Rental Yield</div>
<div class="t" style="top:123px;font-size:6.0px;color:#161616;left:74.80px;width:400px;text-align:center;transform-origin:50% 50%;transform:scaleX(0.9372);-webkit-text-stroke:0.14px #161616;">%</div>
<div class="t" style="top:123px;font-size:6.0px;color:#161616;left:114.20px;width:400px;text-align:center;transform-origin:50% 50%;transform:scaleX(0.9710);-webkit-text-stroke:0.14px #161616;">Ratio</div>
<div class="t" style="top:123px;font-size:6.0px;color:#161616;left:155.20px;width:400px;text-align:center;transform-origin:50% 50%;transform:scaleX(0.9127);-webkit-text-stroke:0.14px #161616;">No</div>
<div class="t" style="top:123px;font-size:6.0px;color:#161616;left:204.70px;width:400px;text-align:center;transform-origin:50% 50%;transform:scaleX(0.9968);-webkit-text-stroke:0.14px #161616;">Percentage, 2 Decimal</div>
<div class="t" style="top:123px;font-size:6.0px;color:#161616;left:444.00px;transform-origin:0 50%;transform:scaleX(1.0115);-webkit-text-stroke:0.14px #161616;">Annual rental income as a percentage of property value.</div>
<div class="t" style="top:135px;font-size:6.1px;color:#2f5597;font-weight:bold;left:-106.60px;width:400px;text-align:center;transform-origin:50% 50%;transform:scaleX(0.9800);-webkit-text-stroke:0.2px #2f5597;">4</div>
<div class="t" style="top:135px;font-size:6.0px;color:#161616;left:-58.60px;width:400px;text-align:center;transform-origin:50% 50%;transform:scaleX(0.9896);-webkit-text-stroke:0.14px #161616;">Financial Performance</div>
<div class="t" style="top:135px;font-size:6.0px;color:#161616;left:20.10px;width:400px;text-align:center;transform-origin:50% 50%;transform:scaleX(0.9920);-webkit-text-stroke:0.14px #161616;">Operating Expense Ratio</div>
<div class="t" style="top:135px;font-size:6.0px;color:#161616;left:74.80px;width:400px;text-align:center;transform-origin:50% 50%;transform:scaleX(0.9372);-webkit-text-stroke:0.14px #161616;">%</div>
<div class="t" style="top:135px;font-size:6.0px;color:#161616;left:114.20px;width:400px;text-align:center;transform-origin:50% 50%;transform:scaleX(0.9710);-webkit-text-stroke:0.14px #161616;">Ratio</div>
<div class="t" style="top:135px;font-size:6.0px;color:#161616;left:155.20px;width:400px;text-align:center;transform-origin:50% 50%;transform:scaleX(0.8582);-webkit-text-stroke:0.14px #161616;">Yes</div>
<div class="t" style="top:135px;font-size:6.0px;color:#161616;left:204.70px;width:400px;text-align:center;transform-origin:50% 50%;transform:scaleX(0.9968);-webkit-text-stroke:0.14px #161616;">Percentage, 2 Decimal</div>
<div class="t" style="top:135px;font-size:6.0px;color:#161616;left:444.00px;transform-origin:0 50%;transform:scaleX(1.0023);-webkit-text-stroke:0.14px #161616;">Operating expenses as a percentage of gross income.</div>
<div class="t" style="top:227px;font-size:6.1px;color:#2f5597;font-weight:bold;left:-106.60px;width:400px;text-align:center;transform-origin:50% 50%;transform:scaleX(0.9800);-webkit-text-stroke:0.2px #2f5597;">6</div>
<div class="t" style="top:227px;font-size:6.0px;color:#161616;left:-58.60px;width:400px;text-align:center;transform-origin:50% 50%;transform:scaleX(0.9980);-webkit-text-stroke:0.14px #161616;">Property Management</div>
<div class="t" style="top:227px;font-size:6.0px;color:#161616;left:20.10px;width:400px;text-align:center;transform-origin:50% 50%;transform:scaleX(1.0035);-webkit-text-stroke:0.14px #161616;">Tenant Turnover Rate</div>
<div class="t" style="top:227px;font-size:6.0px;color:#161616;left:74.80px;width:400px;text-align:center;transform-origin:50% 50%;transform:scaleX(0.9372);-webkit-text-stroke:0.14px #161616;">%</div>
<div class="t" style="top:227px;font-size:6.0px;color:#161616;left:114.20px;width:400px;text-align:center;transform-origin:50% 50%;transform:scaleX(0.9710);-webkit-text-stroke:0.14px #161616;">Ratio</div>
<div class="t" style="top:227px;font-size:6.0px;color:#161616;left:155.20px;width:400px;text-align:center;transform-origin:50% 50%;transform:scaleX(0.8582);-webkit-text-stroke:0.14px #161616;">Yes</div>
<div class="t" style="top:227px;font-size:6.0px;color:#161616;left:204.70px;width:400px;text-align:center;transform-origin:50% 50%;transform:scaleX(0.9968);-webkit-text-stroke:0.14px #161616;">Percentage, 2 Decimal</div>
<div class="t" style="top:227px;font-size:6.0px;color:#161616;left:444.00px;transform-origin:0 50%;transform:scaleX(1.0113);-webkit-text-stroke:0.14px #161616;">Percentage of tenants who do not renew their lease over a given period.</div>
<div class="t" style="top:250px;font-size:6.1px;color:#2f5597;font-weight:bold;left:-106.60px;width:400px;text-align:center;transform-origin:50% 50%;transform:scaleX(0.9800);-webkit-text-stroke:0.2px #2f5597;">8</div>
<div class="t" style="top:250px;font-size:6.0px;color:#161616;left:-58.60px;width:400px;text-align:center;transform-origin:50% 50%;transform:scaleX(0.9980);-webkit-text-stroke:0.14px #161616;">Property Management</div>
<div class="t" style="top:250px;font-size:6.0px;color:#161616;left:20.10px;width:400px;text-align:center;transform-origin:50% 50%;transform:scaleX(0.9938);-webkit-text-stroke:0.14px #161616;">Average Repair Time</div>
<div class="t" style="top:250px;font-size:6.0px;color:#161616;left:74.80px;width:400px;text-align:center;transform-origin:50% 50%;transform:scaleX(0.8716);-webkit-text-stroke:0.14px #161616;">Day</div>
<div class="t" style="top:250px;font-size:6.0px;color:#161616;left:114.20px;width:400px;text-align:center;transform-origin:50% 50%;transform:scaleX(0.9710);-webkit-text-stroke:0.14px #161616;">Ratio</div>
<div class="t" style="top:250px;font-size:6.0px;color:#161616;left:155.20px;width:400px;text-align:center;transform-origin:50% 50%;transform:scaleX(0.8582);-webkit-text-stroke:0.14px #161616;">Yes</div>
<div class="t" style="top:250px;font-size:6.0px;color:#161616;left:204.70px;width:400px;text-align:center;transform-origin:50% 50%;transform:scaleX(0.9847);-webkit-text-stroke:0.14px #161616;">Number, No Decimal</div>
<div class="t" style="top:250px;font-size:6.0px;color:#161616;left:444.00px;transform-origin:0 50%;transform:scaleX(1.0043);-webkit-text-stroke:0.14px #161616;">Average time taken to resolve maintenance issues.</div>
<div class="t" style="top:331px;font-size:6.1px;color:#2f5597;font-weight:bold;left:-106.60px;width:400px;text-align:center;transform-origin:50% 50%;transform:scaleX(0.9800);-webkit-text-stroke:0.2px #2f5597;">9</div>
<div class="t" style="top:331px;font-size:6.0px;color:#161616;left:-58.60px;width:400px;text-align:center;transform-origin:50% 50%;transform:scaleX(1.0064);-webkit-text-stroke:0.14px #161616;">Sales &amp; Marketing</div>
<div class="t" style="top:331px;font-size:5.7px;color:#161616;left:20.10px;width:400px;text-align:center;transform-origin:50% 50%;transform:scaleX(0.9729);-webkit-text-stroke:0.14px #161616;">Lead-to-Lease Conversion Rate</div>
<div class="t" style="top:331px;font-size:6.0px;color:#161616;left:74.80px;width:400px;text-align:center;transform-origin:50% 50%;transform:scaleX(0.9372);-webkit-text-stroke:0.14px #161616;">%</div>
<div class="t" style="top:331px;font-size:6.0px;color:#161616;left:114.20px;width:400px;text-align:center;transform-origin:50% 50%;transform:scaleX(0.9710);-webkit-text-stroke:0.14px #161616;">Ratio</div>
<div class="t" style="top:331px;font-size:6.0px;color:#161616;left:155.20px;width:400px;text-align:center;transform-origin:50% 50%;transform:scaleX(0.9127);-webkit-text-stroke:0.14px #161616;">No</div>
<div class="t" style="top:331px;font-size:6.0px;color:#161616;left:204.70px;width:400px;text-align:center;transform-origin:50% 50%;transform:scaleX(0.9968);-webkit-text-stroke:0.14px #161616;">Percentage, 2 Decimal</div>
<div class="t" style="top:331px;font-size:6.0px;color:#161616;left:444.00px;transform-origin:0 50%;transform:scaleX(1.0086);-webkit-text-stroke:0.14px #161616;">Percentage of leads that convert into signed leases or sales.</div>
<div class="t" style="top:354px;font-size:6.1px;color:#2f5597;font-weight:bold;left:-106.60px;width:400px;text-align:center;transform-origin:50% 50%;transform:scaleX(0.9800);-webkit-text-stroke:0.2px #2f5597;">11</div>
<div class="t" style="top:354px;font-size:6.0px;color:#161616;left:-58.60px;width:400px;text-align:center;transform-origin:50% 50%;transform:scaleX(1.0064);-webkit-text-stroke:0.14px #161616;">Sales &amp; Marketing</div>
<div class="t" style="top:354px;font-size:6.0px;color:#161616;left:20.10px;width:400px;text-align:center;transform-origin:50% 50%;transform:scaleX(0.9685);-webkit-text-stroke:0.14px #161616;">Cost per Lead</div>
<div class="t" style="top:354px;font-size:6.0px;color:#161616;left:74.80px;width:400px;text-align:center;transform-origin:50% 50%;transform:scaleX(0.9591);-webkit-text-stroke:0.14px #161616;">$</div>
<div class="t" style="top:354px;font-size:6.0px;color:#161616;left:114.20px;width:400px;text-align:center;transform-origin:50% 50%;transform:scaleX(0.9795);-webkit-text-stroke:0.14px #161616;">Number</div>
<div class="t" style="top:354px;font-size:6.0px;color:#161616;left:155.20px;width:400px;text-align:center;transform-origin:50% 50%;transform:scaleX(0.8582);-webkit-text-stroke:0.14px #161616;">Yes</div>
<div class="t" style="top:354px;font-size:6.0px;color:#161616;left:204.70px;width:400px;text-align:center;transform-origin:50% 50%;transform:scaleX(1.0036);-webkit-text-stroke:0.14px #161616;">Number, 2 Decimal</div>
<div class="t" style="top:354px;font-size:6.0px;color:#161616;left:444.00px;transform-origin:0 50%;transform:scaleX(1.0142);-webkit-text-stroke:0.14px #161616;">Average marketing costs incurred to acquire a lead.</div>
<div class="t" style="top:110px;font-size:5.3px;color:#1c2740;font-style:italic;left:688.90px;transform-origin:0 50%;transform:scaleX(1.0185);">cumulative form and Lower better</div>
<div class="t" style="top:125px;font-size:5.2px;color:#1c2740;left:684.00px;transform-origin:0 50%;transform:scaleX(0.9980);">•</div>
<div class="t" style="top:125px;font-size:5.3px;color:#1c2740;font-style:italic;left:688.90px;transform-origin:0 50%;transform:scaleX(1.0077);"><u>Cumulative Form</u> will have two options.</div>
<div class="t" style="top:135px;font-size:3.8px;color:#4a556e;left:684.20px;transform-origin:0 50%;transform:scaleX(0.9980);">o</div>
<div class="t" style="top:140px;font-size:5.3px;color:#1c2740;font-style:italic;left:691.60px;transform-origin:0 50%;transform:scaleX(0.9803);">sense to sum, choose the</div>
<div class="t" style="top:156px;font-size:5.3px;color:#1c2740;font-style:italic;left:691.60px;transform-origin:0 50%;transform:scaleX(1.0114);">If it is an amount which can be</div>
<div class="t" style="top:162px;font-size:5.3px;color:#1c2740;font-style:italic;left:691.60px;transform-origin:0 50%;transform:scaleX(0.9811);">summed such as Net or Gross Profit</div>
<div class="t" style="top:184px;font-size:5.3px;color:#1c2740;font-style:italic;left:688.90px;transform-origin:0 50%;transform:scaleX(1.0257);"><u>If the metric is bigger the better</u> you</div>
<div class="t" style="top:190px;font-size:5.3px;color:#1c2740;font-style:italic;left:688.90px;transform-origin:0 50%;transform:scaleX(1.0028);">can leave it <u>blank or choose "No"</u>.</div>
<div class="t" style="top:397px;font-size:7.0px;color:#222;left:-47.30px;width:400px;text-align:center;transform-origin:50% 50%;transform:scaleX(0.9773);">Actual_Database</div>
<div class="t" style="top:397px;font-size:7.0px;color:#222;left:20.65px;width:400px;text-align:center;transform-origin:50% 50%;transform:scaleX(0.9923);">Target_Database</div>
<div class="t" style="top:397px;font-size:7.0px;color:#222;left:90.80px;width:400px;text-align:center;transform-origin:50% 50%;transform:scaleX(0.9921);">Cumulative_Actual</div>
<div class="t" style="top:397px;font-size:7.0px;color:#222;left:164.75px;width:400px;text-align:center;transform-origin:50% 50%;transform:scaleX(1.0144);">Cumulative_Target</div>
<div class="t" style="top:397px;font-size:7.0px;color:#fff;left:409.40px;transform-origin:0 50%;transform:scaleX(1.0356);width:27.8px;overflow:hidden;">Metric_A</div>
</div>
</body></html>
